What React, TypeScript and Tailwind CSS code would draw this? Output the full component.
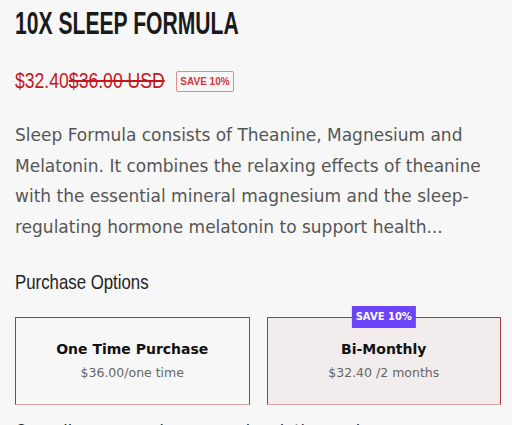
import * as React from 'react';

const condensed = { fontFamily: '"Liberation Sans Narrow", "Liberation Sans", "DejaVu Sans", sans-serif' };
const body = { fontFamily: '"DejaVu Sans", "Open Sans", sans-serif' };

const marks = [
  { left: 430, top: 20 },
  { left: 240, top: 150 },
  { left: 390, top: 200 },
  { left: 0, top: 250 },
  { left: 180, top: 300 },
  { left: 330, top: 370 },
];

function Watermarks() {
  return (
    <>
      {marks.map((m, i) => (
        <span
          key={i}
          className="pointer-events-none absolute -rotate-[30deg] text-[34px] font-bold text-black/[0.025] select-none"
          style={{ left: m.left, top: m.top, fontFamily: '"Liberation Sans", sans-serif' }}
        >
          CouponBirds
        </span>
      ))}
    </>
  );
}

function Option({
  title,
  price,
  active,
  badge,
}: {
  title: string;
  price: string;
  active?: boolean;
  badge?: string;
}) {
  return (
    <div
      className={`relative flex h-[88px] flex-1 flex-col items-center justify-center border border-[#a83a36] border-b-[#d2a3a3] ${
        active ? 'bg-[#f2ecec]' : 'bg-[#f7f7f7]'
      }`}
    >
      {badge && (
        <span
          className="absolute -top-[12px] left-1/2 -translate-x-1/2 bg-[#6b45f7] px-[4px] py-[3px] text-[10px] leading-[16px] font-bold text-white"
          style={body}
        >
          {badge}
        </span>
      )}
      <div className="text-[14px] font-bold text-[#111]" style={body}>
        {title}
      </div>
      <div className="mt-[4px] text-[12.5px] text-[#666]" style={body}>
        {price}
      </div>
    </div>
  );
}

export default function App() {
  return (
    <div className="relative h-[425px] w-[512px] overflow-hidden bg-[#f7f7f7] pl-[15px] pr-[11px]">
      <h1
        className="origin-left scale-x-[0.66] pt-[6px] text-[32px] leading-[34px] font-bold font-stretch-condensed whitespace-nowrap text-[#1a1a1a]"
        style={condensed}
      >
        10X SLEEP FORMULA
      </h1>

      <div className="mt-[28px] flex items-center gap-[11px]">
        <div className="w-[150px]">
          <div
            className="origin-left scale-x-[0.8] text-[22px] leading-[26px] font-stretch-condensed whitespace-nowrap text-[#c4161c]"
            style={condensed}
          >
            $32.40<span className="line-through decoration-[1.5px]">$36.00 USD</span>
          </div>
        </div>
        <span
          className="flex h-[21px] w-[58px] items-center justify-center rounded-[2px] border border-[#e08a8a] text-[10px] font-bold font-stretch-condensed text-[#d0383a]"
          style={condensed}
        >
          SAVE 10%
        </span>
      </div>

      <p className="mt-[26px] pr-[4px] text-[17px] leading-[30.5px] text-[#555]" style={body}>
        Sleep Formula consists of Theanine, Magnesium and Melatonin. It combines the relaxing effects of theanine
        with the essential mineral magnesium and the sleep-regulating hormone melatonin to support health...
      </p>

      <h2
        className="mt-[27px] origin-left scale-x-[0.8] text-[21px] leading-[26px] font-stretch-condensed whitespace-nowrap text-[#222]"
        style={condensed}
      >
        Purchase Options
      </h2>

      <div className="mt-[22px] flex gap-[17px]">
        <Option title="One Time Purchase" price="$36.00/one time" />
        <Option title="Bi-Monthly" price="$32.40 /2 months" active badge="SAVE 10%" />
      </div>

      <p className="mt-[14px] text-[16px] leading-[24px] text-[#222]" style={body}>
        Overall, you can choose a subscription and save more.
      </p>

      <Watermarks />
    </div>
  );
}
